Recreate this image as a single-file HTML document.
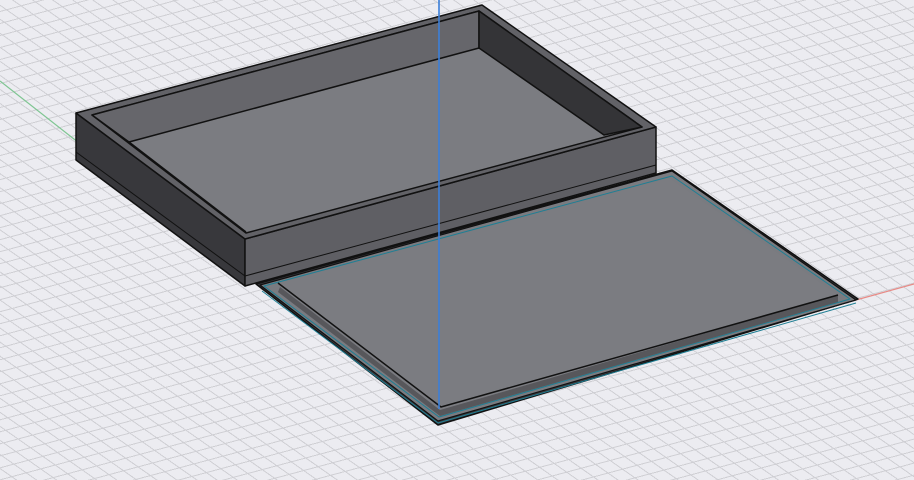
<!DOCTYPE html>
<html><head><style>
html,body{margin:0;padding:0;}
body{width:914px;height:480px;overflow:hidden;background:#ececf1;position:relative;}
.g{position:absolute;inset:0;
background:
repeating-linear-gradient(165deg, transparent 0 10.6px, #cfcfd4 10.6px 11.6px),
repeating-linear-gradient(215deg, transparent 0 10.5px, #cfcfd4 10.5px 11.5px);}
svg{position:absolute;left:0;top:0;}
</style></head><body>
<div class="g"></div>
<svg width="914" height="480" viewBox="0 0 914 480">
<line x1="0" y1="81" x2="260" y2="285" stroke="#7fc592" stroke-width="1.2"/>
<line x1="856" y1="300" x2="914" y2="284" stroke="#e88a86" stroke-width="1.2"/>
<!-- box -->
<g stroke="#111" stroke-width="1.5" stroke-linejoin="round">
<polygon points="76,113 245,239 245,286 76,160" fill="#38383c"/>
<polygon points="245,239 656,127 656,173 245,286" fill="#5f5f64"/>
<polygon points="76,113 482,5 656,127 245,239" fill="#626267"/>
<polygon points="92,115 479,11 642,127 246,233" fill="#7b7c81"/>
<polygon points="92,115 479,11 479,48 129,142" fill="#66666b"/>
<polygon points="479,11 642,127 604,135 479,48" fill="#343437"/>
<polyline points="129,142 246,232" fill="none"/>
<polyline points="76,152 245,276 656,165" fill="none" stroke-width="1"/>
</g>
<!-- lid -->
<g stroke-linejoin="round">
<polygon points="256,284 672,170 858,299 438,425" fill="#3a3a3e" stroke="#111" stroke-width="1.5"/>
<polygon points="260,285 672,171 856,300 438,421" fill="#7a7b80" stroke="#111" stroke-width="1.2"/>
<polygon points="264,286 672,176 850,299 439,417" fill="none" stroke="#1f7f94" stroke-width="1"/>
<polygon points="278,283 669,178 838,295 441,410" fill="#7b7c81" stroke="none"/>
<polygon points="280,287 440,410 838,295 838,302 440,416 278,292" fill="#57575b"/>
<polyline points="278,283 441,407 838,295" fill="none" stroke="#111" stroke-width="1.5"/>
<polyline points="262,291 438,423 856,303" fill="none" stroke="#1f7f94" stroke-width="1"/>
</g>
<line x1="439" y1="0" x2="439" y2="409" stroke="#3b7fd9" stroke-width="1.6"/>
</svg>
</body></html>
